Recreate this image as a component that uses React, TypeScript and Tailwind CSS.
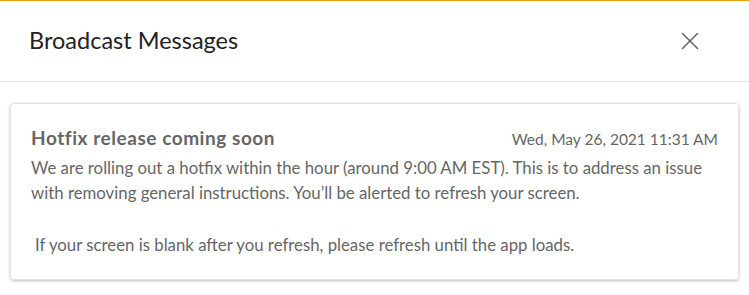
import { X } from "lucide-react";

const font = { fontFamily: '"Lato", "Noto Sans", sans-serif' };

export default function App() {
  return (
    <div className="w-[749px] h-[295px] bg-white border-t border-[#f39c12] overflow-hidden" style={font}>
      {/* Header */}
      <div className="h-[81px] flex items-center justify-between pl-[29px] pr-[44px] border-b border-[#e0e0e0]">
        <h2 className="text-[23.5px] text-[#222] leading-none">Broadcast Messages</h2>
        <button className="text-[#666]">
          <X size={30} strokeWidth={1.3} />
        </button>
      </div>

      {/* Messages */}
      <div className="px-[10px] pt-[21px]">
        <div className="rounded border border-[#e4e4e4] shadow-[0_1px_3px_rgba(0,0,0,0.25)] px-[20px] pt-[20px] pb-[22px] text-[#666]">
          <div className="flex items-baseline justify-between mb-[2px]">
            <h3 className="text-[19px] font-bold tracking-[0.55px] text-[#666] leading-[28px]">Hotfix release coming soon</h3>
            <span className="text-[15.5px] leading-[28px]">Wed, May 26, 2021 11:31 AM</span>
          </div>
          <p className="text-[16.8px] leading-[25px]">
            We are rolling out a hotfix within the hour (around 9:00 AM EST). This is to address an issue with removing general instructions. You’ll be alerted to refresh your screen.
          </p>
          <p className="text-[16.8px] leading-[25px] mt-[27px] pl-[4px]">
            If your screen is blank after you refresh, please refresh until the app loads.
          </p>
        </div>
      </div>
    </div>
  );
}
